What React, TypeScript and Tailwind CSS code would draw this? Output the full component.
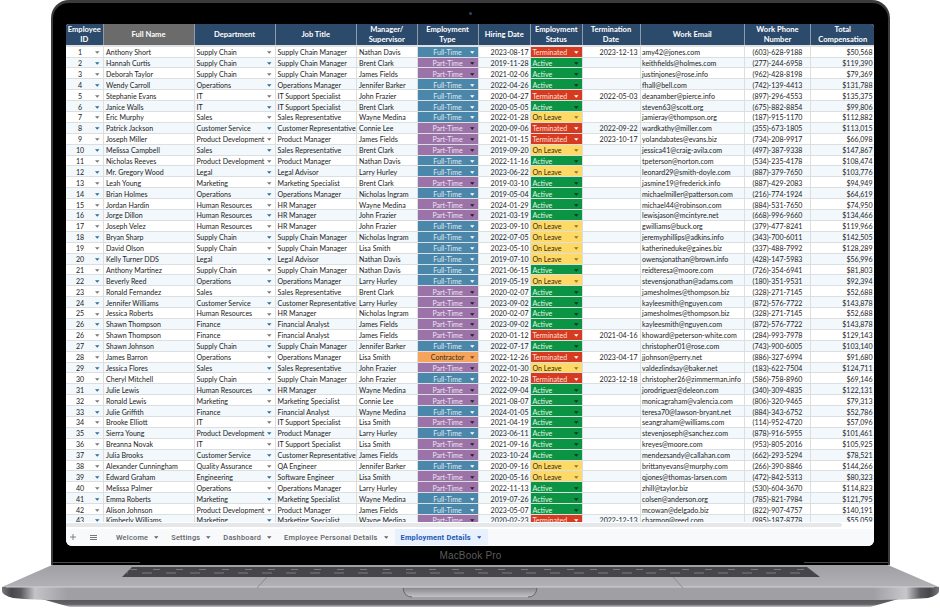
const COLS = "grid grid-cols-[37.5px_91px_81px_81.5px_60.5px_61px_52.5px_51.5px_58px_104.5px_66px_63.5px]";

const HEADERS = [
  "Employee ID",
  "Full Name",
  "Department",
  "Job Title",
  "Manager/ Supervisor",
  "Employment Type",
  "Hiring Date",
  "Employment Status",
  "Termination Date",
  "Work Email",
  "Work Phone Number",
  "Total Compensation",
];

// id|name|department|title|manager|type|hired|status|terminated|email|phone|pay
const ROWS = [
  "1|Anthony Short|Supply Chain|Supply Chain Manager|Nathan Davis|Full-Time|2023-08-17|Terminated|2023-12-13|amy42@jones.com|(603)-628-9188|$50,568",
  "2|Hannah Curtis|Supply Chain|Supply Chain Manager|Brent Clark|Part-Time|2019-11-28|Active||keithfields@holmes.com|(277)-244-6958|$119,390",
  "3|Deborah Taylor|Supply Chain|Supply Chain Manager|James Fields|Part-Time|2021-02-06|Active||justinjones@rose.info|(962)-428-8198|$79,369",
  "4|Wendy Carroll|Operations|Operations Manager|Jennifer Barker|Full-Time|2022-04-26|Active||fhall@bell.com|(742)-139-4413|$131,788",
  "5|Stephanie Evans|IT|IT Support Specialist|John Frazier|Full-Time|2020-04-27|Terminated|2022-05-03|deanamber@pierce.info|(897)-296-4553|$135,375",
  "6|Janice Walls|IT|IT Support Specialist|Brent Clark|Full-Time|2020-05-05|Active||steven63@scott.org|(675)-882-8854|$99,806",
  "7|Eric Murphy|Sales|Sales Representative|Wayne Medina|Full-Time|2022-01-28|On Leave||jamieray@thompson.org|(187)-915-1170|$112,882",
  "8|Patrick Jackson|Customer Service|Customer Representative|Connie Lee|Part-Time|2020-09-06|Terminated|2022-09-22|wardkathy@miller.com|(355)-673-1805|$113,015",
  "9|Joseph Miller|Product Development|Product Manager|James Fields|Part-Time|2021-01-15|Terminated|2023-10-17|yolandabates@evans.biz|(734)-208-9917|$66,098",
  "10|Melissa Campbell|Sales|Sales Representative|Brent Clark|Part-Time|2019-09-20|On Leave||jessica41@craig-avila.com|(497)-387-9338|$147,867",
  "11|Nicholas Reeves|Product Development|Product Manager|Nathan Davis|Full-Time|2022-11-16|Active||tpeterson@norton.com|(534)-235-4178|$108,474",
  "12|Mr. Gregory Wood|Legal|Legal Advisor|Larry Hurley|Full-Time|2023-06-22|On Leave||leonard29@smith-doyle.com|(887)-379-7650|$103,776",
  "13|Leah Young|Marketing|Marketing Specialist|Brent Clark|Part-Time|2019-03-10|Active||jasmine19@frederick.info|(887)-429-2083|$94,949",
  "14|Brian Holmes|Operations|Operations Manager|Nicholas Ingram|Full-Time|2019-05-04|Active||michaelmiller@patterson.com|(216)-774-1924|$64,619",
  "15|Jordan Hardin|Human Resources|HR Manager|Wayne Medina|Part-Time|2024-01-29|Active||michael44@robinson.com|(884)-531-7650|$74,950",
  "16|Jorge Dillon|Human Resources|HR Manager|John Frazier|Part-Time|2021-03-19|Active||lewisjason@mcintyre.net|(668)-996-9660|$134,466",
  "17|Joseph Velez|Human Resources|HR Manager|John Frazier|Full-Time|2023-09-10|On Leave||gwilliams@buck.org|(379)-477-8241|$119,966",
  "18|Bryan Sharp|Supply Chain|Supply Chain Manager|Nicholas Ingram|Full-Time|2022-07-05|On Leave||jeremyphillips@adkins.info|(343)-700-6011|$142,505",
  "19|David Olson|Supply Chain|Supply Chain Manager|Lisa Smith|Full-Time|2023-05-10|On Leave||katherineduke@gaines.biz|(337)-488-7992|$128,289",
  "20|Kelly Turner DDS|Legal|Legal Advisor|Nathan Davis|Full-Time|2019-07-10|On Leave||owensjonathan@brown.info|(428)-147-5983|$56,996",
  "21|Anthony Martinez|Supply Chain|Supply Chain Manager|Nathan Davis|Full-Time|2021-06-15|Active||reidteresa@moore.com|(726)-354-6941|$81,803",
  "22|Beverly Reed|Operations|Operations Manager|Larry Hurley|Full-Time|2019-05-19|On Leave||stevensjonathan@adams.com|(180)-351-9531|$92,394",
  "23|Ronald Fernandez|Sales|Sales Representative|Brent Clark|Part-Time|2020-02-07|Active||jamesholmes@thompson.biz|(328)-271-7145|$52,688",
  "24|Jennifer Williams|Customer Service|Customer Representative|Larry Hurley|Part-Time|2023-09-02|Active||kayleesmith@nguyen.com|(872)-576-7722|$143,878",
  "25|Jessica Roberts|Human Resources|HR Manager|Nicholas Ingram|Part-Time|2020-02-07|Active||jamesholmes@thompson.biz|(328)-271-7145|$52,688",
  "26|Shawn Thompson|Finance|Financial Analyst|James Fields|Part-Time|2023-09-02|Active||kayleesmith@nguyen.com|(872)-576-7722|$143,878",
  "26|Shawn Thompson|Finance|Financial Analyst|James Fields|Part-Time|2020-01-12|Terminated|2021-04-16|khoward@peterson-white.com|(284)-993-7978|$129,143",
  "27|Shawn Johnson|Supply Chain|Supply Chain Manager|Jennifer Barker|Full-Time|2022-07-17|Active||christopher01@rose.com|(743)-900-6005|$103,140",
  "28|James Barron|Operations|Operations Manager|Lisa Smith|Contractor|2022-12-26|Terminated|2023-04-17|jjohnson@perry.net|(886)-327-6994|$91,680",
  "29|Jessica Flores|Sales|Sales Representative|John Frazier|Part-Time|2022-01-30|On Leave||valdezlindsay@baker.net|(183)-622-7504|$124,711",
  "30|Cheryl Mitchell|Supply Chain|Supply Chain Manager|John Frazier|Full-Time|2022-10-28|Terminated|2023-12-18|christopher26@zimmerman.info|(586)-758-8960|$69,146",
  "31|Julie Lewis|Human Resources|HR Manager|Wayne Medina|Part-Time|2022-09-04|Active||jorodriguez@deleon.com|(340)-309-4835|$122,131",
  "32|Ronald Lewis|Marketing|Marketing Specialist|Connie Lee|Part-Time|2021-08-07|Active||monicagraham@valencia.com|(806)-320-9465|$79,313",
  "33|Julie Griffith|Finance|Financial Analyst|Wayne Medina|Full-Time|2024-01-05|Active||teresa70@lawson-bryant.net|(884)-343-6752|$52,786",
  "34|Brooke Elliott|IT|IT Support Specialist|Lisa Smith|Part-Time|2021-04-19|Active||seangraham@williams.com|(114)-952-4720|$57,096",
  "35|Sierra Young|Product Development|Product Manager|Larry Hurley|Full-Time|2023-06-11|Active||stevenjoseph@sanchez.com|(878)-916-5955|$101,461",
  "36|Breanna Novak|IT|IT Support Specialist|Lisa Smith|Part-Time|2021-09-16|Active||kreyes@moore.com|(953)-805-2016|$105,925",
  "37|Julia Brooks|Customer Service|Customer Representative|James Fields|Part-Time|2023-10-24|Active||mendezsandy@callahan.com|(662)-293-5294|$78,521",
  "38|Alexander Cunningham|Quality Assurance|QA Engineer|Jennifer Barker|Full-Time|2020-09-16|On Leave||brittanyevans@murphy.com|(266)-390-8846|$144,266",
  "39|Edward Graham|Engineering|Software Engineer|Lisa Smith|Part-Time|2020-05-16|On Leave||qjones@thomas-larsen.com|(472)-842-5313|$80,323",
  "40|Melissa Palmer|Operations|Operations Manager|Larry Hurley|Part-Time|2022-11-13|Active||zhill@taylor.biz|(530)-604-3670|$114,823",
  "41|Emma Roberts|Marketing|Marketing Specialist|Wayne Medina|Full-Time|2019-07-26|Active||colsen@anderson.org|(785)-821-7984|$121,795",
  "42|Alison Johnson|Product Development|Product Manager|James Fields|Full-Time|2023-05-07|Active||mcowan@delgado.biz|(822)-907-4757|$140,191",
  "43|Kimberly Williams|Marketing|Marketing Specialist|Wayne Medina|Part-Time|2020-02-23|Terminated|2022-12-13|charmon@reed.com|(985)-187-8778|$55,059",
];

const TYPE_STYLES: Record<string, { box: string; caret: string }> = {
  "Full-Time": { box: "bg-[#4b86ab] text-[#dfe9f0]", caret: "text-white" },
  "Part-Time": { box: "bg-[#9b73a9] text-[#eee4f1]", caret: "text-[#222222]" },
  Contractor: { box: "bg-[#f6a45c] text-[#3a2a10]", caret: "text-[#6b4a20]" },
};

const STATUS_STYLES: Record<string, { box: string; caret: string }> = {
  Terminated: { box: "bg-[#d63b22] text-[#fbe3dc]", caret: "text-white" },
  Active: { box: "bg-[#0b9444] text-[#e4f5ea]", caret: "text-[#10301c]" },
  "On Leave": { box: "bg-[#ffd966] text-[#33290a]", caret: "text-[#8a7430]" },
};

const TABS = ["Welcome", "Settings", "Dashboard", "Employee Personal Details"];

function Caret({ className }: { className: string }) {
  return (
    <svg viewBox="0 0 6 3.5" className={"w-[4.5px] h-[3px] shrink-0 fill-current " + className}>
      <path d="M0 0h6L3 3.5z" />
    </svg>
  );
}

function TableRow({ line, index }: { line: string; index: number }) {
  const [id, name, dept, title, manager, type, hired, status, ended, email, phone, pay] = line.split("|");
  const even = index % 2 === 1;
  const caret = even ? "text-[#2a6f9e]" : "text-[#777777]";
  const cell = "h-full border-r border-[#dcdfe0] overflow-hidden whitespace-nowrap flex items-center pt-[2px] leading-none";
  const typeStyle = TYPE_STYLES[type];
  const statusStyle = STATUS_STYLES[status];

  return (
    <div className={COLS + " h-[10.9px] border-b border-[#dcdfe0] " + (even ? "bg-[#f2f8fb]" : "bg-white")}>
      <div className={cell + " pl-[10px] pr-[3px] justify-between"}>
        <span className="w-[8px] text-center">{id}</span>
        <Caret className={caret} />
      </div>
      <div className={cell + " pl-[2.5px]"}>{name}</div>
      <div className={cell + " pl-[2px] pr-[3px] justify-between"}>
        <span>{dept}</span>
        <Caret className={caret} />
      </div>
      <div className={cell + " pl-[2px]"}>{title}</div>
      <div className={cell + " pl-[2px]"}>{manager}</div>
      <div className={cell + " relative justify-center " + typeStyle.box}>
        <span>{type}</span>
        <Caret className={"absolute right-[3px] " + typeStyle.caret} />
      </div>
      <div className={cell + " justify-end pr-[1.5px]"}>{hired}</div>
      <div className={cell + " justify-between pl-[1.5px] pr-[3px] " + statusStyle.box}>
        <span>{status}</span>
        <Caret className={statusStyle.caret} />
      </div>
      <div className={cell + " justify-end pr-[2px]"}>{ended}</div>
      <div className={cell + " pl-[1.5px]"}>{email}</div>
      <div className={cell + " justify-center"}>{phone}</div>
      <div className={cell + " justify-end pr-[2px] border-r-0"}>{pay}</div>
    </div>
  );
}

function SheetTabs() {
  return (
    <div className="h-[17px] bg-[#f8f9fa] flex items-center text-[7.4px] tracking-[0.22px] text-[#5f6368] font-medium font-['Roboto',sans-serif]">
      <svg viewBox="0 0 8 8" className="w-[6px] h-[6px] ml-[4px] stroke-[#777777] fill-none">
        <path d="M4 0v8M0 4h8" strokeWidth="1.2" />
      </svg>
      <div className="ml-[14px] w-[7px] flex flex-col gap-[1px]">
        <div className="h-[1px] bg-[#777777]" />
        <div className="h-[1px] bg-[#777777]" />
        <div className="h-[1px] bg-[#777777]" />
      </div>
      <div className="ml-[19px] flex items-center gap-[12.5px]">
        {TABS.map((tab) => (
          <div key={tab} className="flex items-center gap-[6px]">
            <span>{tab}</span>
            <Caret className="text-[#5f6368]" />
          </div>
        ))}
      </div>
      <div className="ml-[6.5px] h-[16px] pl-[6px] pr-[7px] bg-[#e8f0fe] text-[#1a56b0] font-bold flex items-center gap-[6px]">
        <span>Employment Details</span>
        <Caret className="text-[#1a56b0]" />
      </div>
    </div>
  );
}

function Screen() {
  return (
    <div className="w-[808px] h-[522px] ml-[13px] bg-white rounded-t-[3px] rounded-b-[6px] overflow-hidden flex flex-col font-['Lato',sans-serif] text-[7.05px] text-[#222222]">
      <div className={COLS + " h-[21px] bg-[#2c4a6b] text-white text-[7.6px] font-bold leading-[9.3px] text-center"}>
        {HEADERS.map((label) => (
          <div
            key={label}
            className={
              "flex items-center justify-center border-r border-[#8d9bab] last:border-r-0 " +
              (label === "Full Name" ? "bg-[#6b6b6b]" : "")
            }
          >
            {label}
          </div>
        ))}
      </div>
      <div className="h-[1.7px] bg-[#dfe1e2]" />
      <div className="h-[475.3px] overflow-hidden">
        {ROWS.map((line, i) => (
          <TableRow key={i} line={line} index={i} />
        ))}
      </div>
      <div className="h-[7px] bg-white pt-[1px]">
        <div className="w-[776px] h-[4.5px] bg-[#e6e7e8] rounded-r-[2px]" />
      </div>
      <SheetTabs />
    </div>
  );
}

function Base() {
  return (
    <svg viewBox="0 0 940 44" className="w-[940px] h-[44px] block">
      <defs>
        <linearGradient id="top" x1="0" y1="0" x2="0" y2="1">
          <stop offset="0" stopColor="#a0a0a4" />
          <stop offset="1" stopColor="#b2b2b6" />
        </linearGradient>
        <linearGradient id="front" x1="0" y1="0" x2="1" y2="0">
          <stop offset="0" stopColor="#77777b" />
          <stop offset="0.01" stopColor="#48484c" />
          <stop offset="0.02" stopColor="#5a5a5e" />
          <stop offset="0.035" stopColor="#c4c4c8" />
          <stop offset="0.07" stopColor="#a0a0a4" />
          <stop offset="0.93" stopColor="#a0a0a4" />
          <stop offset="0.965" stopColor="#c8c8cc" />
          <stop offset="0.98" stopColor="#5a5a5e" />
          <stop offset="0.99" stopColor="#48484c" />
          <stop offset="1" stopColor="#77777b" />
        </linearGradient>
        <linearGradient id="lip" x1="0" y1="0" x2="0" y2="1">
          <stop offset="0" stopColor="#56565a" />
          <stop offset="0.7" stopColor="#626266" />
          <stop offset="1" stopColor="#c8c8ca" />
        </linearGradient>
        <linearGradient id="notch" x1="0" y1="0" x2="0" y2="1">
          <stop offset="0" stopColor="#8a8a8e" />
          <stop offset="1" stopColor="#c2c2c6" />
        </linearGradient>
      </defs>
      <path d="M38 33 L70 42 H870 L902 33z" fill="url(#lip)" />
      <path d="M2 22 L52 0 H888 L939 22z" fill="url(#top)" />
      <path d="M2 22 H939 V26 Q939 30 928 33 Q905 35 880 35 H60 Q35 35 13 33 Q2 30 2 26z" fill="url(#front)" />
      <path d="M6 22 H934" stroke="#d2d2d6" strokeWidth="1" />
      <path d="M132 2 H807 L820 12 H122z" fill="#45454a" />
      <path d="M130 4.5 H811" stroke="#86868a" strokeWidth="0.8" strokeDasharray="7 16" />
      <path d="M127 8 H815" stroke="#7c7c80" strokeWidth="1" strokeDasharray="10 14" strokeDashoffset="9" />
      <path d="M257 23 L267 12 M673 12 L683 23" stroke="#808084" strokeWidth="0.8" fill="none" />
      <path d="M403 23 H537 Q536 32 528 32 H412 Q404 32 403 23z" fill="url(#notch)" />
      <path d="M403 23 Q404 32 412 32 M537 23 Q536 32 528 32" stroke="#55555a" strokeWidth="0.8" fill="none" />
    </svg>
  );
}

export default function App() {
  return (
    <div className="w-[940px] h-[609px] bg-white overflow-hidden flex flex-col">
      <div className="ml-[51px] w-[839px] h-[565px] bg-black rounded-t-[18px] border-x-2 border-t-[3px] border-[#3b3b3e] flex flex-col shrink-0">
        <div className="h-[21px] flex items-center justify-center">
          <div className="w-[3.5px] h-[3.5px] rounded-full bg-[#2c4660]" />
        </div>
        <Screen />
        <div className="relative flex-1 flex items-center justify-center text-[10px] tracking-[0.2px] text-[#5c5c5e] font-['Liberation_Sans',sans-serif]">
          MacBook Pro
          <div className="absolute left-0 bottom-[2px] w-[87px] h-[1px] bg-[#4a4a4c]" />
          <div className="absolute right-0 bottom-[2px] w-[84px] h-[1px] bg-[#4a4a4c]" />
        </div>
      </div>
      <Base />
    </div>
  );
}
